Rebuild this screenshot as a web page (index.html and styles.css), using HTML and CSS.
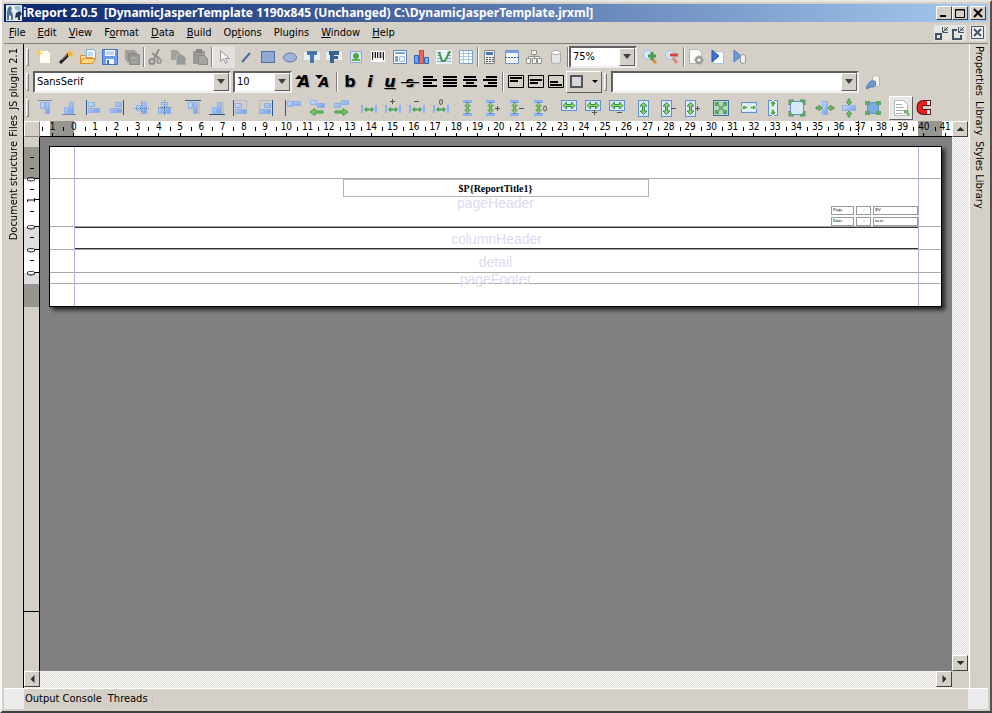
FILE: index.html
```html
<!DOCTYPE html>
<html lang="en">
<head>
<meta charset="utf-8">
<title>iReport 2.0.5 [DynamicJasperTemplate]</title>
<link rel="stylesheet" href="styles.css">
</head>
<body>
<svg class="defs" aria-hidden="true">
  <defs>
    <linearGradient id="gb" x1="0" y1="0" x2="1" y2="1"><stop offset="0" stop-color="#cfe0fb"/><stop offset="1" stop-color="#6f9ce6"/></linearGradient>
    <linearGradient id="gf" x1="0" y1="0" x2="0" y2="1"><stop offset="0" stop-color="#ffe9a8"/><stop offset="1" stop-color="#f5a93a"/></linearGradient>
    <path id="dh" d="M-6 0L-2.500-3.500V-1H2.500V-3.500L6 0 2.500 3.500V1H-2.500V3.500Z" fill="#8fd070" stroke="#3d8f45"/>
    <path id="ar" d="M-6-1H2V-3.500L7 0 2 3.500V1H-6Z" fill="#7cc860" stroke="#3d9a40"/>
    <path id="tr" d="M-4-1H-1V-3L2 0-1 3V1H-4Z" fill="#6fbf62" stroke="#4d9a55"/>
    <g id="hsp"><path d="M2 6h2v8H2zM16 6h2v8h-2z" fill="#8fb2ea"/><path d="M4 8h1v5H4zM15 8h1v5h-1z" fill="#b7cdf2"/><path d="M5 10.500L8 8v5zM15 10.500L12 8v5z" fill="#3f9a45"/><path d="M7 10.500h6" stroke="#4fa84f" stroke-width="2"/></g>
    <g id="vsp"><path d="M5 2h9v3H5zM5 15h9v3H5z" fill="#8fb2ea"/><path d="M7 4h5v1H7zM7 15h5v1H7z" fill="#5f92e0"/><use href="#dh" transform="translate(9.500 10) rotate(90) scale(.8)"/></g>
    <g id="wbox"><rect class="l" x="2.500" y="2.500" width="15" height="10"/><use href="#dh" transform="translate(10 7.500)"/></g>
    <g id="hbox"><rect class="l" x="4.500" y="1.500" width="10" height="16"/><use href="#dh" transform="translate(9.500 9.500) rotate(90)"/></g>
  </defs>
</svg>
<div class="window">
  <header class="titlebar">
    <svg class="logo" viewBox="0 0 16 16"><path fill="#dce8ee" d="M0 0h16v16H0z"/><path d="M2 3l2-2 2 2-1 3 2 3v6H5V11L3 10v5H1V7z" fill="#4e7590"/><path d="M9 1h5l1 4-3 1-3-2z" fill="#9cc0d2"/><path d="M10 8l4-2 2 3-2 2v4h-2v-3l-3 1z" fill="#24384c"/><path d="M6 2l3 4-2 4" fill="none" stroke="#fff"/></svg>
    <h1>iReport 2.0.5&nbsp; [DynamicJasperTemplate 1190x845 (Unchanged) C:\DynamicJasperTemplate.jrxml]</h1>
    <button class="sys" aria-label="Minimize"><svg viewBox="0 0 12 10"><path d="M2 8h6" stroke="#000" stroke-width="2"/></svg></button>
    <button class="sys" aria-label="Maximize"><svg viewBox="0 0 12 10"><path d="M1.500 1.500h9v8h-9zM1 2h10" stroke="#000" fill="none"/></svg></button>
    <button class="sys close" aria-label="Close"><svg viewBox="0 0 12 10"><path d="M2 1l8 8M10 1L2 9" stroke="#000" stroke-width="2"/></svg></button>
  </header>
  <nav class="menubar">
    <button><u>F</u>ile</button><button><u>E</u>dit</button><button><u>V</u>iew</button><button>F<u>o</u>rmat</button><button><u>D</u>ata</button><button><u>B</u>uild</button><button>Op<u>t</u>ions</button><button>Plugins</button><button><u>W</u>indow</button><button><u>H</u>elp</button>
    <span class="grow"></span>
    <button class="mdi" aria-label="Iconify"><svg viewBox="0 0 16 16"><path d="M2 9h5v5H2z" fill="none" stroke="#456" stroke-width="2"/><path d="M14 2L9 7M8.500 2v5.500H14M11 2.500v2.500h3" fill="none" stroke="#456"/></svg></button>
    <button class="mdi" aria-label="Restore"><svg viewBox="0 0 16 16"><path d="M7 5H3v9h8v-4" fill="none" stroke="#456" stroke-width="2"/><path d="M14 2L9 7M8.500 2v5.500H14M11 2.500v2.500h3" fill="none" stroke="#456"/></svg></button>
    <button class="mdi last" aria-label="Close document"><svg viewBox="0 0 16 16"><path d="M1.500 1.500h12v12h-12z" fill="#eef3f6" stroke="#456"/><path d="M4 4l7 7M11 4l-7 7" stroke="#456" stroke-width="2"/></svg></button>
  </nav>
  <div class="middle">
    <aside class="side left">
      <button>JS plugin 2.1</button><button>Files</button><button>Document structure</button>
    </aside>
    <main>
      <div class="bar">
        <i class="grip"></i>
        <button class="t" aria-label="New"><svg viewBox="0 0 16 16"><path d="M3.500 1.500h8l3 3v10h-11z" fill="#fffef4" stroke="#d5d1bc"/><path d="M3 0l1 3 3 1-3 1-1 3-1-3-2-1 2-1z" fill="#ffc63a"/></svg></button>
        <button class="t" aria-label="Wizard"><svg viewBox="0 0 16 16"><path d="M2 14L11 5" stroke="#1c1c1c" stroke-width="3"/><path d="M4 11l5-5" stroke="#888"/><path d="M12 0l1 3 3 0-2 2 1 3-3-1-2 1 0-3-2-2 3 0z" fill="#f7b32b"/></svg></button>
        <button class="t" aria-label="Open"><svg viewBox="0 0 16 16"><path d="M6.500.5h7l2 2v8h-9z" fill="#f2f8ff" stroke="#7fa8de"/><path d="M8 4h5M8 6h5" stroke="#8fb6ea"/><path d="M.5 6.500h5l1 2h6v6H.5z" fill="url(#gf)" stroke="#e0902a"/><path d="M.5 14.500l3-5h12l-3 5z" fill="#ffd988" stroke="#e0902a"/></svg></button>
        <button class="t" aria-label="Save"><svg viewBox="0 0 16 16"><path d="M.5.5h15v15H.5z" fill="#6d9dea" stroke="#3d72cb"/><path d="M3 1h10v6H3z" fill="#fff"/><path d="M4 3h8M4 5h8" stroke="#87b0ea"/><path d="M4 10h8v5H4z" fill="#eef5ff"/><path d="M5 11h2v4H5z" fill="#3d6fc6"/></svg></button>
        <button class="t" aria-label="Save all"><svg viewBox="0 0 16 16"><path d="M1 1h10v10H1z" fill="#9b9b98"/><path d="M3 3h10v10H3z" fill="#8d8d8a" stroke="#aaa"/><path d="M5.500 5.500h10v10h-10z" fill="#999" stroke="#8b8b88"/><path d="M7 9h6M8 13h5" stroke="#aaaaa7" stroke-width="2"/></svg></button>
        <i class="sep"></i>
        <button class="t" aria-label="Cut"><svg viewBox="0 0 16 16"><path d="M11 0L6 10M4 4l8 6" stroke="#8c8c89" stroke-width="2"/><circle cx="4" cy="12.500" r="2.500" fill="none" stroke="#8c8c89" stroke-width="2"/><circle cx="11" cy="12" r="2" fill="none" stroke="#9c9c99" stroke-width="2"/></svg></button>
        <button class="t" aria-label="Copy"><svg viewBox="0 0 16 16"><path d="M1 1h6l3 3v7H1z" fill="#a2a29f"/><path d="M6.500 5.500h5l4 3v7h-9z" fill="#999996" stroke="#b2b2af"/></svg></button>
        <button class="t" aria-label="Paste"><svg viewBox="0 0 16 16"><path d="M1 2h12v13H1z" fill="#999996"/><path d="M4 0h6v4H4z" fill="#858582"/><path d="M6.500 6.500h6l3 3v6h-9z" fill="#a4a4a1" stroke="#8b8b88"/></svg></button>
        <i class="sep"></i>
        <button class="t on" aria-label="Select"><svg viewBox="0 0 16 16"><path d="M4.500 1.500v11l3-3 2 5 2-1-2-4h4z" fill="#f6f6f4" stroke="#999"/></svg></button>
        <button class="t" aria-label="Line"><svg viewBox="0 0 16 16"><path d="M4 13L12 4" stroke="#4a6a9e" stroke-width="2"/></svg></button>
        <button class="t" aria-label="Rectangle"><svg viewBox="0 0 16 16"><path d="M1.500 2.500h13v11h-13z" fill="#8fa9cf" stroke="#4e6c9c"/></svg></button>
        <button class="t" aria-label="Ellipse"><svg viewBox="0 0 16 16"><ellipse cx="8" cy="8.500" rx="6.500" ry="4.500" fill="#9fb5d6" stroke="#5874a3"/></svg></button>
        <button class="t" aria-label="Static text"><svg viewBox="0 0 16 16"><path d="M0 3h16v8H0z" fill="#e9eef5"/><path d="M3 2h10v4h-3v8H6V6H3z" fill="#4577a8"/></svg></button>
        <button class="t" aria-label="Text field"><svg viewBox="0 0 16 16"><path d="M0 3h16v8H0z" fill="#e9eef5"/><path d="M3 2h10v4H8v1h4v3H8v4H4V6H3z" fill="#386490"/></svg></button>
        <button class="t" aria-label="Image"><svg viewBox="0 0 16 16"><path d="M2.500 2.500h11v11h-11z" fill="#d6e9fb" stroke="#8fa8c8"/><path d="M4 10h8v2H4z" fill="#63b54c"/><circle cx="8" cy="7" r="3" fill="#4fa545"/></svg></button>
        <button class="t" aria-label="Barcode"><svg viewBox="0 0 16 16"><path d="M1 2h14v11H1z" fill="#fff"/><path d="M2.500 3v8M5.500 3v6M7.500 3v6M10.500 3v6M13.500 3v8" stroke="#222"/><path d="M4 3v6M9 3v6M12 3v6" stroke="#777"/></svg></button>
        <button class="t" aria-label="Subreport"><svg viewBox="0 0 16 16"><path d="M1.500 1.500h13v13h-13z" fill="#fff" stroke="#5c87b8"/><path d="M3 3h10v2H3zM3 7h3v6H3z" fill="#7ba7dd"/><path d="M7.500 7.500h5v5h-5z" fill="#e9f1fb" stroke="#a9c3e2"/></svg></button>
        <button class="t" aria-label="Chart"><svg viewBox="0 0 16 16"><path d="M.5 6.500h4v8h-4z" fill="#6fa2ec" stroke="#2e63b4"/><path d="M5.500 1.500h4v13h-4z" fill="#ee6a5c" stroke="#c4453a"/><path d="M10.500 8.500h4v6h-4z" fill="#77b4e8" stroke="#2e63b4"/></svg></button>
        <button class="t" aria-label="Crosstab chart"><svg viewBox="0 0 16 16"><path d="M0 1h16v14H0z" fill="#e8f2f4"/><path d="M1 3.500h4M1 6.500h4M1 9.500h4M1 12.500h4M11 3.500h4M11 6.500h4M11 9.500h4M11 12.500h4" stroke="#84a6cf"/><path d="M3 3l3 9h3L14 2" fill="none" stroke="#43944b" stroke-width="2"/></svg></button>
        <button class="t" aria-label="Crosstab"><svg viewBox="0 0 16 16"><path d="M1.500 1.500h13v13h-13z" fill="#fff" stroke="#7c9fc8"/><path d="M2 4.500h12M2 7.500h12M2 10.500h12M5.500 2v12M10.500 2v12" stroke="#a9c4e6"/></svg></button>
        <i class="sep"></i>
        <button class="t" aria-label="Calculator"><svg viewBox="0 0 16 16"><path d="M2.500 1.500h10v13h-10z" fill="#eee" stroke="#888"/><path d="M4 3h7v3H4z" fill="#4777b5"/><path d="M4 8.500h8M4 10.500h8M4 12.500h8" stroke="#555" stroke-dasharray="2 1"/></svg></button>
        <button class="t" aria-label="Bands"><svg viewBox="0 0 16 16"><path d="M1.500 1.500h13v13h-13z" fill="#f5f9ff" stroke="#6c93cb"/><path d="M2 3h12" stroke="#7ba4e0" stroke-width="2"/><path d="M1 8.500h14" stroke="#36588c" stroke-dasharray="2 1"/></svg></button>
        <button class="t" aria-label="Groups"><svg viewBox="0 0 16 16"><path d="M5.500 1.500h5v4h-5zM.5 9.500h4v5h-4zM6.500 9.500h4v5h-4zM11.500 9.500h4v5h-4zM8.500 6v3M2.500 9V7.500h11V9" fill="#f5f5f2" stroke="#94948f"/></svg></button>
        <button class="t" aria-label="Database"><svg viewBox="0 0 16 16"><path d="M3.500 3.500v10q4.500 3 9 0v-10z" fill="#e6e6e3" stroke="#aaa"/><ellipse cx="8" cy="3.500" rx="4.500" ry="2" fill="#fff" stroke="#aaa"/></svg></button>
        <i class="sep"></i>
        <div class="combo zoom"><select aria-label="Zoom"><option>75%</option></select><i class="drop"></i></div>
        <button class="t" aria-label="Zoom in"><svg viewBox="0 0 16 16"><circle cx="6" cy="6" r="4.500" fill="#d5e8fa" stroke="#9dbbd8"/><path d="M9 9l5 5" stroke="#d98a3a" stroke-width="3"/><path d="M10 3v8M6 7h8" stroke="#46a04a" stroke-width="3"/></svg></button>
        <button class="t" aria-label="Zoom out"><svg viewBox="0 0 16 16"><circle cx="6" cy="6" r="4.500" fill="#d5e4f8" stroke="#a5bddb"/><path d="M9 9l4 5" stroke="#dc8a78" stroke-width="3"/><path d="M6 6h8" stroke="#d9443a" stroke-width="3"/></svg></button>
        <i class="sep"></i>
        <button class="t" aria-label="Compile"><svg viewBox="0 0 16 16"><path d="M1.500.5h9l3 3v11h-12z" fill="#fcfcfa" stroke="#b5b5b0"/><circle cx="11" cy="11" r="3" fill="none" stroke="#999" stroke-width="2"/><path d="M11 6v10M6 11h10M8 8l6 6M14 8l-6 6" stroke="#999"/><circle cx="11" cy="11" r="1.500" fill="#eee"/></svg></button>
        <button class="t" aria-label="Execute"><svg viewBox="0 0 16 16"><path d="M3.500 2.500h8l2 2v10h-10z" fill="#fff" stroke="#a7c0dc"/><path d="M2 1l7 6-7 6z" fill="#3c74ce" stroke="#2554a2"/></svg></button>
        <button class="t" aria-label="Execute with connection"><svg viewBox="0 0 16 16"><path d="M2 1l7 6-7 6z" fill="#6b9be0" stroke="#4676be"/><path d="M8.500 6.500q2.500-2 5 0v7q-2.500 2-5 0z" fill="#f1f1f1" stroke="#999"/></svg></button>
      </div>
      <div class="bar">
        <i class="grip"></i>
        <div class="combo font"><select aria-label="Font"><option>SansSerif</option></select><i class="drop"></i></div>
        <div class="combo size"><select aria-label="Font size"><option>10</option></select><i class="drop"></i></div>
        <button class="f" aria-label="Increase font"><b class="big">A</b><svg class="hat" viewBox="0 0 8 4"><path d="M0 4l4-4 4 4z"/></svg></button>
        <button class="f" aria-label="Decrease font"><b class="small">A</b><svg class="hat" viewBox="0 0 8 4"><path d="M0 0l4 4 4-4z"/></svg></button>
        <i class="sep wide"></i>
        <button class="f" aria-label="Bold"><b>b</b></button>
        <button class="f" aria-label="Italic"><b class="it">i</b></button>
        <button class="f" aria-label="Underline"><b class="it un">u</b></button>
        <button class="f" aria-label="Strikethrough"><b class="st">&nbsp;s&nbsp;</b></button>
        <button class="f" aria-label="Align left"><svg viewBox="0 0 16 16"><path class="k" d="M1 3h10M1 6h14M1 9h9M1 12h14"/></svg></button>
        <button class="f" aria-label="Justify"><svg viewBox="0 0 16 16"><path class="k" d="M1 3h14M1 6h14M1 9h14M1 12h14"/></svg></button>
        <button class="f" aria-label="Align center"><svg viewBox="0 0 16 16"><path class="k" d="M2 3h12M1 6h14M4 9h8M1 12h14"/></svg></button>
        <button class="f" aria-label="Align right"><svg viewBox="0 0 16 16"><path class="k" d="M4 3h11M1 6h14M6 9h9M2 12h13"/></svg></button>
        <i class="sep wide"></i>
        <button class="f" aria-label="Align top"><svg viewBox="0 0 16 16"><path d="M.5 1.500h15v12H.5z" fill="none" stroke="#000"/><path class="k" d="M2 4h12M2 7h8"/></svg></button>
        <button class="f" aria-label="Align middle"><svg viewBox="0 0 16 16"><path d="M.5 1.500h15v12H.5z" fill="none" stroke="#000"/><path class="k" d="M2 6h12M2 9h8"/></svg></button>
        <button class="f" aria-label="Align bottom"><svg viewBox="0 0 16 16"><path d="M.5 1.500h15v12H.5z" fill="none" stroke="#000"/><path class="k" d="M2 8h8M2 11h12"/></svg></button>
        <button class="border-btn" aria-label="Borders"><svg viewBox="0 0 32 16"><path d="M4 2h11v11H4z" fill="#d5d6de" stroke="#555" stroke-width="2"/><path d="M25 6h6l-3 3z"/></svg></button>
        <i class="grip"></i>
        <div class="combo style"><select aria-label="Style"><option></option></select><i class="drop"></i></div>
        <button class="f" aria-label="Edit style"><svg viewBox="0 0 16 16"><path d="M7.500 2.500q4-2 7 0v9q-3 3-7 0z" fill="#f4f4f2" stroke="#b5b5b5"/><path d="M1 14l3-5 2-2h4l1 4-3 2H5l-3 2z" fill="#7098d0" stroke="#4f78b0"/></svg></button>
      </div>
      <div class="bar tall">
        <i class="grip"></i>
        <button class="g" aria-label="Align top"><svg viewBox="0 0 20 20"><path class="n" d="M3 2.500h14" opacity=".6"/><path class="b" d="M5.500 4.500h4v6h-4zM10.500 4.500h4v11h-4z"/></svg></button>
        <button class="g" aria-label="Align bottom"><svg viewBox="0 0 20 20"><path class="n" d="M3 16.500h14" opacity=".6"/><path class="b" d="M5.500 9.500h4v6h-4zM10.500 4.500h4v11h-4z"/></svg></button>
        <button class="g" aria-label="Align left"><svg viewBox="0 0 20 20"><path class="n" d="M3.500 2v15"/><path class="b" d="M5.500 4.500h6v4h-6zM5.500 10.500h11v4h-11z"/></svg></button>
        <button class="g" aria-label="Align right"><svg viewBox="0 0 20 20"><path class="n" d="M16.500 2v15"/><path class="b" d="M8.500 4.500h6v4h-6zM3.500 10.500h11v4h-11z"/></svg></button>
        <button class="g" aria-label="Align horizontal axis"><svg viewBox="0 0 20 20"><path class="b" d="M5.500 7.500h4v5h-4zM11.500 4.500h4v11h-4z"/><path class="n" d="M3 10.500h15M10.500 3v14" stroke-dasharray="1 1" opacity=".7"/></svg></button>
        <button class="g" aria-label="Align vertical axis"><svg viewBox="0 0 20 20"><path class="b" d="M6.500 4.500h6v5h-6zM3.500 10.500h12v5h-12z"/><path class="n" d="M9.500 2v16M3 9.500h13" stroke-dasharray="1 1" opacity=".7"/></svg></button>
        <i class="gap"></i>
        <button class="g" aria-label="Align to band top"><svg viewBox="0 0 20 20"><path class="n" d="M2 2.500h16"/><path class="b" d="M5.500 4.500h4v6h-4zM10.500 4.500h4v11h-4z"/><path d="M16.500 4v12" stroke="#b5b8c0"/></svg></button>
        <button class="g" aria-label="Align to band bottom"><svg viewBox="0 0 20 20"><path class="n" d="M2 16.500h16"/><path class="b" d="M5.500 9.500h4v6h-4zM10.500 4.500h4v11h-4z"/><path d="M16.500 4v12" stroke="#b5b8c0"/></svg></button>
        <button class="g" aria-label="Align to left margin"><svg viewBox="0 0 20 20"><path class="n" d="M2.500 2v16"/><path class="b" d="M4.500 5.500h6v4h-6zM4.500 11.500h11v4h-11z"/><path d="M4 2.500h12M15.500 3v7" stroke="#b5b8c0"/></svg></button>
        <button class="g" aria-label="Align to right margin"><svg viewBox="0 0 20 20"><path class="n" d="M17.500 2v16"/><path class="b" d="M9.500 5.500h6v4h-6zM4.500 11.500h11v4h-11z"/><path d="M4 2.500h12M4.500 3v7" stroke="#b5b8c0"/></svg></button>
        <i class="gap"></i>
        <button class="g" aria-label="Organize"><svg viewBox="0 0 20 20"><path class="n" d="M2.500 2v16"/><path class="b" d="M4.500 3.500h5v5h-5zM10.500 3.500h7v4h-7z"/></svg></button>
        <button class="g" aria-label="Move left"><svg viewBox="0 0 20 20"><path class="b" d="M3.500 2.500h6v4h-6zM10.500 5.500h7v4h-7z"/><use href="#ar" transform="translate(10 14) rotate(180)"/></svg></button>
        <button class="g" aria-label="Move right"><svg viewBox="0 0 20 20"><path class="b" d="M3.500 5.500h6v4h-6zM10.500 2.500h7v4h-7z"/><use href="#ar" transform="translate(10 14)"/></svg></button>
        <i class="gap"></i>
        <button class="g" aria-label="Horizontal spacing"><svg viewBox="0 0 20 20"><use href="#hsp" y="1"/></svg></button>
        <button class="g" aria-label="Increase horizontal spacing"><svg viewBox="0 0 20 20"><use href="#hsp" y="1"/><path class="d" d="M7 3.500h5M9.500 1v5"/></svg></button>
        <button class="g" aria-label="Decrease horizontal spacing"><svg viewBox="0 0 20 20"><use href="#hsp" y="1"/><path class="d" d="M7 3.500h5"/></svg></button>
        <button class="g" aria-label="Remove horizontal spacing"><svg viewBox="0 0 20 20"><use href="#hsp" y="1"/><ellipse class="d" cx="10" cy="4" rx="1.500" ry="2.500"/></svg></button>
        <i class="gap"></i>
        <button class="g" aria-label="Vertical spacing"><svg viewBox="0 0 20 20"><use href="#vsp" x="-1"/></svg></button>
        <button class="g" aria-label="Increase vertical spacing"><svg viewBox="0 0 20 20"><use href="#vsp" x="-2"/><path class="d" d="M12 10.500h5M14.500 8v5"/></svg></button>
        <button class="g" aria-label="Decrease vertical spacing"><svg viewBox="0 0 20 20"><use href="#vsp" x="-2"/><path class="d" d="M12 10.500h5"/></svg></button>
        <button class="g" aria-label="Remove vertical spacing"><svg viewBox="0 0 20 20"><use href="#vsp" x="-2"/><ellipse class="d" cx="14" cy="10.500" rx="1.500" ry="2.500"/></svg></button>
        <i class="gap"></i>
        <button class="g" aria-label="Same width"><svg viewBox="0 0 20 20"><use href="#wbox"/></svg></button>
        <button class="g" aria-label="Same width, largest"><svg viewBox="0 0 20 20"><use href="#wbox"/><path class="d" d="M9 14.500h5M11.500 12v5"/></svg></button>
        <button class="g" aria-label="Same width, smallest"><svg viewBox="0 0 20 20"><use href="#wbox"/><path class="d" d="M10 14.500h5"/></svg></button>
        <i class="gap"></i>
        <button class="g" aria-label="Same height"><svg viewBox="0 0 20 20"><use href="#hbox" x="-1" y="1"/></svg></button>
        <button class="g" aria-label="Same height, smallest"><svg viewBox="0 0 20 20"><use href="#hbox" x="-2" y="1"/><path class="d" d="M12 10.500h5"/></svg></button>
        <button class="g" aria-label="Same height, largest"><svg viewBox="0 0 20 20"><use href="#hbox" x="-2" y="1"/><path class="d" d="M12 10.500h5M14.500 8v5"/></svg></button>
        <i class="gap"></i>
        <button class="g" aria-label="Same size"><svg viewBox="0 0 20 20"><rect x="2.500" y="2.500" width="15" height="15" fill="#b5d8c0" stroke="#3c6fae"/><path d="M4 4h4v4H4zM12 4h4v4h-4zM4 12h4v4H4zM12 12h4v4h-4z" fill="#4f9f55"/><path d="M6 6l8 8M14 6l-8 8" stroke="#6fae70" stroke-width="2"/></svg></button>
        <i class="gap"></i>
        <button class="g" aria-label="Center horizontally"><svg viewBox="0 0 20 20"><rect class="l" x="2.500" y="4.500" width="15" height="10"/><path d="M2 9.500L6 6v2h3v3H6v2zM18 9.500L14 6v2h-3v3h3v2z" fill="#5cb05a" stroke="#fff"/></svg></button>
        <button class="g" aria-label="Center vertically"><svg viewBox="0 0 20 20"><rect class="l" x="5.500" y="2.500" width="9" height="15"/><path d="M10 2L6 6h2v3h4V6h2zM10 18L6 14h2v-3h4v3h2z" fill="#5cb05a" stroke="#fff"/></svg></button>
        <button class="g" aria-label="Center in band"><svg viewBox="0 0 20 20"><rect class="l" x="3.500" y="3.500" width="13" height="13"/><path d="M2 2h5L2 7zM18 2v5l-5-5zM2 18v-5l5 5zM18 18h-5l5-5z" fill="#6cba68" stroke="#4d9a58"/></svg></button>
        <i class="gap"></i>
        <button class="g" aria-label="Join sides left"><svg viewBox="0 0 20 20"><rect class="b" x="7.500" y="3.500" width="5" height="13"/><use href="#tr" transform="translate(5 10)"/><use href="#tr" transform="translate(15 10) rotate(180)"/></svg></button>
        <button class="g" aria-label="Join sides right"><svg viewBox="0 0 20 20"><rect class="b" x="3.500" y="7.500" width="13" height="5"/><use href="#tr" transform="translate(10 5) rotate(90)"/><use href="#tr" transform="translate(10 15) rotate(-90)"/></svg></button>
        <button class="g" aria-label="Shrink"><svg viewBox="0 0 20 20"><rect x="4.500" y="4.500" width="11" height="11" fill="#7ba9e0" stroke="#5c8fce"/><path d="M2 3h5v4H2zM13 3h5v4h-5zM2 13h5v4H2zM13 13h5v4h-5z" fill="#62a768"/></svg></button>
        <i class="gap"></i>
        <button class="g raised" aria-label="Show page"><svg viewBox="0 0 20 20"><path d="M3.500 2.500h9l4 4v11h-13z" fill="#fff" stroke="#bbb"/><path d="M5 6.500h6M5 9.500h8M5 12.500h8M5 15.500h6" stroke="#aaa"/><path d="M13 12h5l-1 2 2 3-2 1-2-3-2 1z" fill="#6fb06a"/></svg></button>
        <button class="g" aria-label="Snap"><svg viewBox="0 0 20 20"><path d="M16 5H9q-4.500 0-4.500 4.500T9 14h7" fill="none" stroke="#5c0c0c" stroke-width="6"/><path d="M13 5H9q-4.500 0-4.500 4.500T9 14h4" fill="none" stroke="#ef1d1d" stroke-width="4"/><path d="M12 5h3M12 14h3" stroke="#fff" stroke-width="4"/></svg></button>
      </div>
      <div class="editor">
        <div class="corner"></div>
        <div class="hruler"><span>1</span><span>0</span><span>1</span><span>2</span><span>3</span><span>4</span><span>5</span><span>6</span><span>7</span><span>8</span><span>9</span><span>10</span><span>11</span><span>12</span><span>13</span><span>14</span><span>15</span><span>16</span><span>17</span><span>18</span><span>19</span><span>20</span><span>21</span><span>22</span><span>23</span><span>24</span><span>25</span><span>26</span><span>27</span><span>28</span><span>29</span><span>30</span><span>31</span><span>32</span><span>33</span><span>34</span><span>35</span><span>36</span><span class="cursor">37</span><span>38</span><span>39</span><span>40</span><span>41</span></div>
        <div class="vscroll"><button class="sb" aria-label="Scroll up"><svg viewBox="0 0 8 8"><path d="M0 6l4-4 4 4z"/></svg></button><span class="grow"></span><button class="sb" aria-label="Scroll down"><svg viewBox="0 0 8 8"><path d="M0 2l4 4 4-4z"/></svg></button></div>
        <div class="vruler">
          <div class="m top"></div>
          <div class="w head"><span>0</span><span class="one">1</span></div>
          <div class="s cols"><span>0</span></div>
          <div class="w det"><span>0</span></div>
          <div class="s foot"><span>0</span></div>
          <div class="m bottom"></div>
          <div class="end"></div>
        </div>
        <div class="canvas">
          <div class="page">
            <div class="band margin-top"></div>
            <div class="band header">
              <span class="name">pageHeader</span>
              <div class="title-field">$P{ReportTitle1}</div>
              <div class="fields"><span>Page</span><span class="c">:</span><span>$V</span><span>Date</span><span class="c">:</span><span>new</span></div>
            </div>
            <div class="band column"><div class="rule"><span class="name">columnHeader</span></div></div>
            <div class="band detail"><span class="name">detail</span></div>
            <div class="band footer"><span class="name">pageFooter</span></div>
            <div class="band margin-bottom"></div>
          </div>
        </div>
        <div class="hscroll"><button class="sb" aria-label="Scroll left"><svg viewBox="0 0 8 8"><path d="M6 0L2 4l4 4z"/></svg></button><span class="grow"></span><button class="sb" aria-label="Scroll right"><svg viewBox="0 0 8 8"><path d="M2 0l4 4-4 4z"/></svg></button></div>
      </div>
    </main>
    <aside class="side right">
      <button>Properties</button><button>Library</button><button>Styles Library</button>
    </aside>
  </div>
  <footer class="status">
    <i class="pad"></i><button>Output Console</button><button>Threads</button><span class="grow"></span><i class="pad"></i>
  </footer>
</div>
</body>
</html>
```
FILE: styles.css
```css
* { box-sizing: border-box; }
html, body { height: 100%; margin: 0; }
body { font: 11px/14px "DejaVu Sans Condensed", "DejaVu Sans", sans-serif; color: #000; background: #d4d0c8; }
button { font: inherit; color: inherit; background: none; border: 0; margin: 0; padding: 0; white-space: nowrap; }
i { font-style: normal; }
.defs { position: absolute; width: 0; height: 0; }
.grow { flex: 1; }
.window { height: 100vh; display: flex; flex-direction: column; padding: 2px; border: 2px solid; border-color: #e8e6e0 #55524e #404040 #f8f7f4; }

.titlebar { flex: none; height: 18px; display: flex; align-items: center; padding-right: 2px; background: linear-gradient(90deg, #0a246a, #a6caf0); color: #fff; }
.logo { width: 16px; height: 16px; margin: 0 1px 0 2px; }
.titlebar h1 { flex: 1; margin: 0; font: bold 12px/16px "Noto Sans", sans-serif; white-space: nowrap; overflow: hidden; }
.sys { width: 16px; height: 14px; display: flex; align-items: center; justify-content: center; background: #d4d0c8; border: 1px solid; border-color: #fff #404040 #404040 #fff; }
.sys svg { width: 12px; height: 10px; }
.close { margin-left: 2px; }

.menubar { flex: none; height: 22px; display: flex; align-items: center; border-bottom: 1px solid #808080; }
.menubar button { padding: 0 7px 0 5px; }
.menubar .mdi { width: 16px; height: 16px; padding: 0; background: #e6e5e0; }
.mdi svg { display: block; width: 16px; height: 16px; }
.menubar .last { margin: 0 2px 0 4px; }

.middle { flex: 1; min-height: 0; display: flex; }
.side { flex: none; display: flex; flex-direction: column; align-items: center; gap: 3px; }
.side button { writing-mode: vertical-rl; width: 16px; line-height: 16px; padding: 1px 0; background: #d8d4cc; }
.left { width: 20px; padding-top: 3px; border-right: 1px solid #000; }
.left button { transform: rotate(180deg); }
.right { width: 19px; padding-top: 1px; border-left: 1px solid #fff; }
main { flex: 1; min-width: 0; display: flex; flex-direction: column; }

.bar { flex: none; height: 25px; display: flex; align-items: center; padding-left: 2px; }
.tall { height: 27px; }
.grip { width: 3px; height: 18px; margin-right: 4px; border: 1px solid; border-color: #fff #808080 #808080 #fff; }
.sep { width: 2px; height: 20px; border-left: 1px solid #808080; border-right: 1px solid #fff; }
.sep.wide { margin: 0 2px; }
.gap { width: 4px; }
.t { width: 22px; height: 22px; display: flex; align-items: center; justify-content: center; }
.t svg, .f > svg { width: 16px; height: 16px; }
.on { background: #e3e1dd; }
.f { position: relative; width: 20px; height: 22px; display: flex; align-items: center; justify-content: center; }
.f b { font: bold 16px/20px "DejaVu Sans", sans-serif; text-shadow: 1px 1px 1px #999; }
.f .it { font-style: italic; }
.f .un { text-decoration: underline; text-decoration-thickness: 1px; }
.f .st { text-decoration: line-through; font-size: 14px; }
.f .big { font-style: italic; }
.f .small { font-style: italic; font-size: 14px; }
.f > .hat { position: absolute; left: 1px; top: 4px; width: 8px; height: 4px; }
.k { stroke: #000; stroke-width: 2; }
.g { width: 24px; height: 24px; display: flex; align-items: center; justify-content: center; }
.g svg { width: 20px; height: 20px; }
.b { fill: url(#gb); stroke: #8fb0e4; }
.l { fill: #d9e8fb; stroke: #5f8fd4; }
.n { fill: none; stroke: #2c5a80; }
.d { fill: none; stroke: #555; }
.raised, .border-btn { border: 1px solid; border-color: #fff #606060 #606060 #fff; }
.raised { background: #e9e7e3; }
.border-btn { width: 36px; height: 22px; padding: 2px 0; margin-right: 2px; }
.border-btn svg { display: block; width: 32px; height: 16px; }

.combo { display: flex; height: 22px; background: #fff; border: 2px solid; border-color: #606060 #eee #eee #606060; }
.combo select { flex: 1; min-width: 0; appearance: none; border: 0; padding: 0 2px; background: #fff; font: inherit; color: #000; }
.drop { flex: none; width: 16px; display: flex; align-items: center; justify-content: center; background: #d4d0c8; border: 1px solid; border-color: #fff #606060 #606060 #fff; }
.drop::after { content: ""; border: 4px solid transparent; border-top: 5px solid #404040; border-bottom: 0; }
.zoom { width: 68px; margin-right: 2px; }
.font { width: 198px; margin-right: 2px; }
.size { width: 59px; margin-right: 2px; }
.style { width: 248px; margin-right: 4px; }

.editor { flex: 1; min-height: 0; display: grid; grid-template: 16px 1fr 17px / 16px 1fr 17px; }
.corner { border: 1px solid; border-color: #fff #808080 #808080 #fff; }
.hruler { display: flex; overflow: hidden; padding-left: 2px; border-bottom: 1px solid #000; background: linear-gradient(90deg, #fff 10px, #979590 10px 34px, #fff 34px calc(100% - 34px), #979590 calc(100% - 34px) calc(100% - 10px), #fff calc(100% - 10px)); }
.hruler span { flex: 1 0 0; min-width: 0; text-align: center; font-size: 10px; line-height: 12px; background: linear-gradient(#000, #000) 0 6px / 1px 4px no-repeat, linear-gradient(#000, #000) 50% 100% / 1px 3px no-repeat; }
.hruler span:last-child { margin-right: -4px; }
.hruler .cursor { background: linear-gradient(#000, #000) 0 6px / 1px 4px no-repeat, repeating-linear-gradient(#000 0 2px, #fff 2px 3px) 40% 0 / 1px 100% no-repeat; }
.vscroll, .hscroll { display: flex; background: repeating-conic-gradient(#fff 0 25%, #dcd9d2 0 50%) 0 0 / 2px 2px; }
.vscroll { grid-column: 3; grid-row: 1 / 3; flex-direction: column; }
.hscroll { grid-column: 1 / 3; grid-row: 3; }
.sb { flex: none; width: 16px; height: 16px; display: flex; align-items: center; justify-content: center; background: #d4d0c8; border: 1px solid; border-color: #fff #404040 #404040 #fff; }
.sb svg { width: 9px; height: 8px; fill: #303030; }
.vruler { grid-column: 1; grid-row: 2; display: flex; flex-direction: column; padding-top: 10px; border-right: 1px solid #000; }
.vruler div { position: relative; flex: none; }
.vruler .m { background: #979590; }
.vruler .w { background: #fff; }
.vruler .s { background: #dedede; }
.vruler .top { height: 32px; background: linear-gradient(#000, #000) 6px 10px / 4px 1px no-repeat, linear-gradient(#000, #000) 6px 21px / 4px 1px no-repeat, #979590; }
.vruler .head { height: 48px; background: linear-gradient(#000, #000) 6px 10px / 4px 1px no-repeat, linear-gradient(#000, #000) 6px 32px / 4px 1px no-repeat, #fff; }
.vruler .cols { height: 23px; background: linear-gradient(#000, #000) 6px 10px / 4px 1px no-repeat, #dedede; }
.vruler .det { height: 23px; background: linear-gradient(#000, #000) 6px 10px / 4px 1px no-repeat, #fff; }
.vruler .foot { height: 11px; }
.vruler .bottom { height: 23px; }
.vruler .end { flex: 1; background: linear-gradient(#000, #000) 0 304px / 100% 1px no-repeat; }
.vruler span { position: absolute; z-index: 1; left: 0; top: -5px; width: 15px; height: 10px; writing-mode: vertical-rl; transform: rotate(180deg); font-size: 10px; line-height: 15px; text-align: center; background: linear-gradient(#000, #000) 0 50% / 4px 1px no-repeat; }
.vruler .one { top: 16px; }

.canvas { grid-column: 2; grid-row: 2; min-width: 0; background: #808080; padding: 9px 10px 0 9px; }
.page { position: relative; background: #fff; border: 1px solid #000; box-shadow: 3px 3px 4px #222; }
.page::after { content: ""; position: absolute; inset: 0 22px 0 24px; border: solid #b4b0e0; border-width: 0 1px; }
.band { position: relative; display: flex; justify-content: center; align-items: center; border-bottom: 1px solid #a8a8a8; }
.margin-top { height: 32px; }
.header { height: 48px; align-items: flex-start; }
.column { height: 23px; align-items: stretch; padding: 0 22px 0 24px; }
.rule { flex: 1; display: flex; justify-content: center; align-items: center; border: solid #333; border-width: 1px 0; }
.detail { height: 23px; }
.footer { height: 11px; }
.margin-bottom { height: 22px; border: 0; }
.name { padding-top: 2px; font: 14px/16px "Liberation Sans", sans-serif; color: #dcdaf2; }
.header .name { position: absolute; top: 14px; }
.title-field { position: relative; width: 306px; height: 18px; border: 1px solid #b4b4b4; background: #fff; text-align: center; font: bold 10px/18px "Liberation Serif", serif; }
.fields { position: absolute; right: 23px; bottom: 0; display: grid; grid-template-columns: 23px 15px 45px; gap: 2px; }
.fields span { height: 9px; border: 1px solid #999; padding-left: 1px; font: 5px/6px "Liberation Serif", serif; }
.fields .c { text-align: center; }

.status { flex: none; height: 21px; display: flex; align-items: center; border-top: 1px solid #fff; }
.pad { align-self: stretch; width: 20px; background: #ececec; }
.status button { padding: 0 4px 0 1px; border-right: 1px solid #ccc8c0; }
```
